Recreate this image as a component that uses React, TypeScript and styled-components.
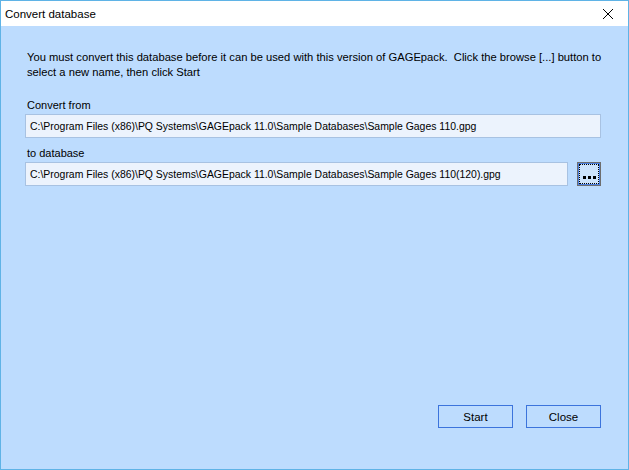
import React from "react";
import styled, { createGlobalStyle } from "styled-components";

const Global = createGlobalStyle`
  html, body { margin: 0; padding: 0; }
  body { font-family: "Liberation Sans", Arial, sans-serif; font-size: 11px; color: #000; }
`;

const Window = styled.div`
  width: 629px;
  height: 470px;
  box-sizing: border-box;
  border: 1px solid #5fb3e6;
  display: flex;
  flex-direction: column;
  background: #bddcfe;
`;

const TitleBar = styled.div`
  height: 25px;
  flex: none;
  background: #ffffff;
  display: flex;
  align-items: center;
  justify-content: space-between;
  padding-left: 4px;
`;

const Title = styled.span`
  font-size: 11.5px;
  color: #000;
  padding-top: 1px;
`;

const CloseX = styled.div`
  width: 45px;
  height: 25px;
  display: flex;
  align-items: center;
  justify-content: center;
  margin-right: -2px;
`;

const Body = styled.div`
  flex: 1;
  display: flex;
  flex-direction: column;
  padding: 24px 27px 0 24px;
`;

const Intro = styled.p`
  margin: 0 -10px 0 2px;
  line-height: 15px;
  font-size: 11.2px;
`;

const Label = styled.div<{ $top: number }>`
  margin: ${(p) => p.$top}px 0 0 2px;
  line-height: 13px;
`;

const Row = styled.div`
  display: flex;
  align-items: center;
  gap: 9px;
  margin-top: 2px;
`;

const Field = styled.div<{ $width: number }>`
  width: ${(p) => p.$width}px;
  height: 24px;
  box-sizing: border-box;
  background: #ecf3fd;
  border: 1px solid #a8c2e2;
  display: flex;
  align-items: center;
  padding-left: 4px;
  white-space: nowrap;
  overflow: hidden;
  font-size: 10.45px;
`;

const Browse = styled.button`
  width: 24px;
  height: 24px;
  box-sizing: border-box;
  border: 1px solid #6e6e6e;
  padding: 1px;
  background: #4b7fe0;
  display: flex;
  cursor: pointer;
`;

const BrowseInner = styled.div`
  flex: 1;
  background: #cde3fb;
  border: 1px dotted #000;
  display: flex;
  align-items: flex-end;
  justify-content: center;
  gap: 2px;
  padding-bottom: 4px;
  box-sizing: border-box;
`;

const Dot = styled.span`
  width: 3px;
  height: 3px;
  background: #000;
`;

const Buttons = styled.div`
  margin-top: auto;
  margin-bottom: 41px;
  display: flex;
  justify-content: flex-end;
  gap: 13px;
`;

const Btn = styled.button`
  width: 75px;
  height: 23px;
  box-sizing: border-box;
  border: 1px solid #3c74dc;
  background: #bddcfe;
  font-family: "Liberation Sans", Arial, sans-serif;
  font-size: 11.5px;
  color: #000;
  padding: 0;
  cursor: pointer;
`;

export default function App() {
  return (
    <>
      <Global />
      <Window>
        <TitleBar>
          <Title>Convert database</Title>
          <CloseX>
            <svg width="12" height="12" viewBox="0 0 12 12">
              <path d="M1 1 L11 11 M11 1 L1 11" stroke="#000" strokeWidth="1" />
            </svg>
          </CloseX>
        </TitleBar>
        <Body>
          <Intro>
            You must convert this database before it can be used with this version of GAGEpack.&nbsp; Click the browse [...] button to select a new name, then click Start
          </Intro>
          <Label $top={19}>Convert from</Label>
          <Row>
            <Field $width={576}>C:\Program Files (x86)\PQ Systems\GAGEpack 11.0\Sample Databases\Sample Gages 110.gpg</Field>
          </Row>
          <Label $top={9}>to database</Label>
          <Row>
            <Field $width={544}>C:\Program Files (x86)\PQ Systems\GAGEpack 11.0\Sample Databases\Sample Gages 110(120).gpg</Field>
            <Browse>
              <BrowseInner>
                <Dot />
                <Dot />
                <Dot />
              </BrowseInner>
            </Browse>
          </Row>
          <Buttons>
            <Btn>Start</Btn>
            <Btn>Close</Btn>
          </Buttons>
        </Body>
      </Window>
    </>
  );
}
